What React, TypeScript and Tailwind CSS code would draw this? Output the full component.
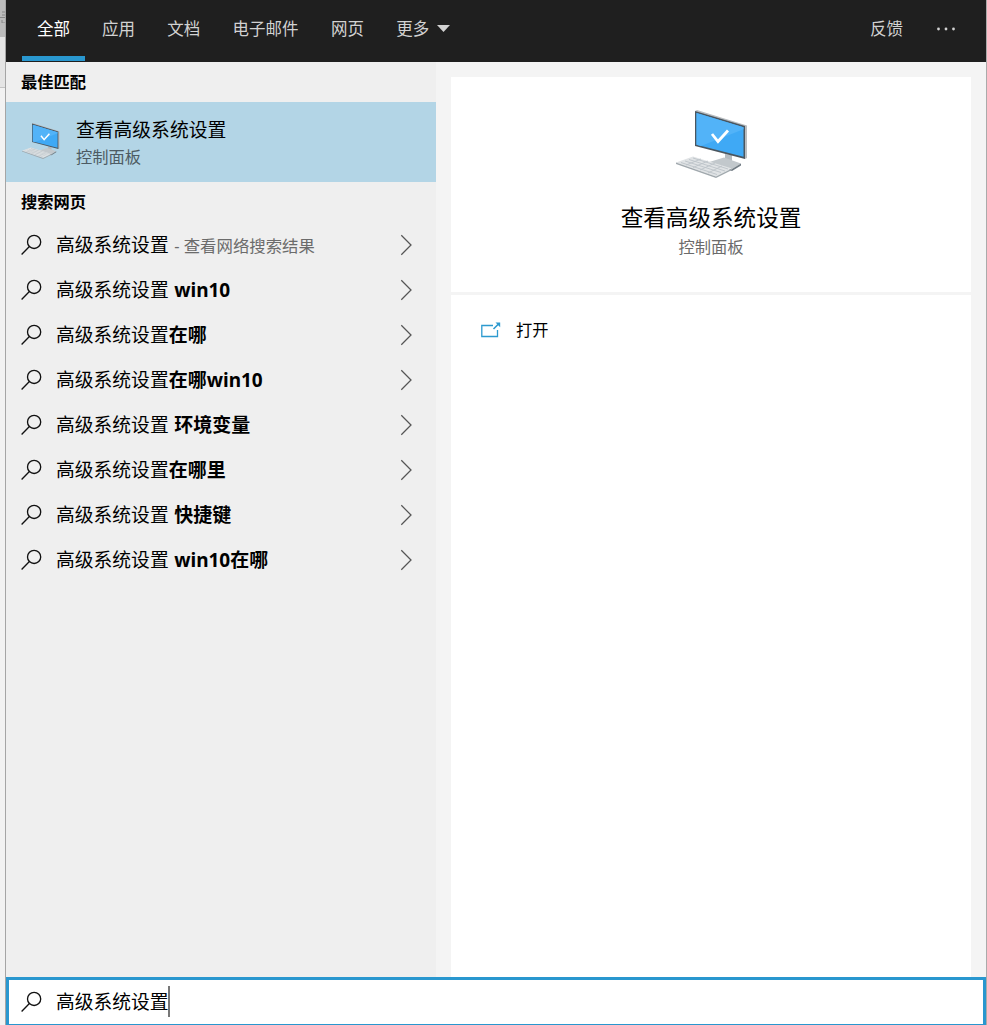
import type { ReactNode } from "react";

const tabs = ["应用", "文档", "电子邮件", "网页"];

const suggestions = [
  { space: false, text: "" },
  { space: true, text: "win10" },
  { space: false, text: "在哪" },
  { space: false, text: "在哪win10" },
  { space: true, text: "环境变量" },
  { space: false, text: "在哪里" },
  { space: true, text: "快捷键" },
  { space: true, text: "win10在哪" },
];

function SearchIcon() {
  return (
    <svg className="mb-px block h-[22px] w-[22px] shrink-0" viewBox="0 0 22 22" fill="none" stroke="#111" strokeWidth="1.35">
      <circle cx="13.1" cy="7.9" r="6.6" />
      <path d="M8.4 12.6 0.6 20.4" />
    </svg>
  );
}

function ChevronIcon() {
  return (
    <svg className="mb-0.5 block h-[22px] w-3 shrink-0" viewBox="0 0 12 22" fill="none" stroke="#555" strokeWidth="1.25">
      <path d="M1.3 1.3 11 11 1.3 20.7" />
    </svg>
  );
}

function ComputerIcon({ className }: { className: string }) {
  return (
    <svg className={className} viewBox="0 0 74 70" fill="none">
      <path d="M49 44v9h7v-8z" fill="#b4bbc0" />
      <path d="m30 53 18-5.500 17 6-9 5.500z" fill="#c2c8cc" />
      <path d="m30 53 26 6 9-5.500v2L56 61l-26-6.500z" fill="#727c84" />
      <path d="m19 1 2-1 50 15.500V48l-2 1z" fill="#b9bdc0" />
      <path d="m19 1 50 15v33L19 36z" fill="#4b565f" />
      <path d="m20.500 3 47 14.300v29.500l-47-12z" fill="#3fa9f5" />
      <path d="m20.500 3 47 14.300v2L25 35.900l-4.500-1.100z" fill="#52b3f8" />
      <path d="m36 24 6 7.500L52 20.500" stroke="#fff" strokeWidth="2.8" />
      <path d="m0 52.500 17-6 39 12-16 8z" fill="#e0e3e5" />
      <path d="m0 52.500 40 14 16-8v1.500L40 68 0 54z" fill="#a0a8ad" />
      <path
        d="m5 52.500 36 12M9 51l36 11.500M13 49.500 49 61M17 48l35 11M10 55l15-6M17 57.500l15-6.500M24 60l15-7M32 63l14-7"
        stroke="#bcc3c8"
        strokeWidth=".9"
      />
    </svg>
  );
}

function OpenIcon() {
  return (
    <svg className="block h-4 w-5 shrink-0" viewBox="0 0 20 16" fill="none" stroke="#2d9acf">
      <path d="M12 3.500H.8v11h15.700V8" strokeWidth="1.3" />
      <path d="m12.500 7 5-5" strokeWidth="1.6" />
      <path d="M14.500.5h4.700v4.700z" fill="#2d9acf" stroke="none" />
    </svg>
  );
}

function SectionTitle({ children }: { children: ReactNode }) {
  return <h2 className="flex h-10 items-center pl-[15px] text-[16.25px] font-bold">{children}</h2>;
}

function Header() {
  return (
    <header className="flex h-[62px] items-start bg-[#1f1f1f] pl-4 text-[16.5px] leading-[57px] text-[#d2d2d2]">
      <div className="mr-4 h-[61px] w-[63px] border-b-[5px] border-[#2997cf] text-center text-white">全部</div>
      <nav className="ml-px flex gap-[32.3px]">
        {tabs.map((tab) => (
          <span key={tab}>{tab}</span>
        ))}
        <span className="flex items-center gap-2">
          更多
          <svg className="h-[7px] w-[13px]" viewBox="0 0 13 7">
            <path d="M0 0h13L6.500 7z" fill="#d2d2d2" />
          </svg>
        </span>
      </nav>
      <div className="ml-auto flex items-center pr-[30px]">
        <span className="mr-[34px]">反馈</span>
        <svg className="h-1 w-[19px]" viewBox="0 0 19 4" fill="#d2d2d2">
          <circle cx="1.500" cy="2" r="1.400" />
          <circle cx="9" cy="2" r="1.400" />
          <circle cx="16.500" cy="2" r="1.400" />
        </svg>
      </div>
    </header>
  );
}

function Results() {
  return (
    <section className="w-[430px] shrink-0 bg-[#efefef]">
      <SectionTitle>最佳匹配</SectionTitle>
      <div className="flex h-20 bg-[#b3d5e6] pl-[15px]">
        <ComputerIcon className="mt-[21px] ml-px h-[37px] w-[39px]" />
        <div className="ml-[15px] pt-3.5">
          <div className="text-[18.8px] leading-7">查看高级系统设置</div>
          <div className="text-[16.25px] leading-[26px] text-[#4d5b63]">控制面板</div>
        </div>
      </div>
      <SectionTitle>搜索网页</SectionTitle>
      <ul className="pt-px">
        {suggestions.map((item, i) => (
          <li key={i} className="flex h-[45px] items-center pr-6 pl-[15px] whitespace-pre">
            <SearchIcon />
            <span className="ml-[13px] text-[18.8px]">高级系统设置</span>
            {item.text ? (
              <b className={item.space ? "ml-[5.5px] text-[19px]" : "text-[19px]"}>{item.text}</b>
            ) : (
              <span className="ml-[5.5px] pt-0.5 text-[16.4px] text-[#6b6b6b]">- 查看网络搜索结果</span>
            )}
            <span className="ml-auto">
              <ChevronIcon />
            </span>
          </li>
        ))}
      </ul>
    </section>
  );
}

function Preview() {
  return (
    <section className="flex flex-1 flex-col bg-[#f4f4f4] px-[15px] pt-[15px]">
      <div className="flex h-[215px] flex-col items-center bg-white pt-[33px]">
        <ComputerIcon className="ml-1 h-[70px] w-[74px]" />
        <h1 className="mt-[21px] text-[22.6px] leading-[34px]">查看高级系统设置</h1>
        <p className="text-[16.25px] leading-6 text-[#6b6b6b]">控制面板</p>
      </div>
      <div className="mt-[3px] flex-1 bg-white">
        <div className="flex h-[70px] items-center pl-[30px] text-[16.25px]">
          <OpenIcon />
          <span className="ml-[15px]">打开</span>
        </div>
      </div>
    </section>
  );
}

export default function App() {
  return (
    <div className="flex h-[1025px] w-[987px] overflow-hidden font-['Noto_Sans','Noto_Sans_CJK_SC',sans-serif] text-black">
      <div className="flex w-1.5 shrink-0 flex-col border-r border-[#a5a5a5] bg-[#f2f2f2]">
        <div className="h-[37px] bg-[#bcbcbc] pt-[11px]">
          <svg className="h-3 w-[5px]" viewBox="0 0 5 12" stroke="#888" fill="none">
            <path d="M2 1h3M2 4h3M0 6.500h5M2 9v3h3" />
          </svg>
        </div>
        <div className="h-[51px] border-b border-[#c4c4c4] bg-[#e5e5e5]" />
      </div>
      <div className="flex flex-1 flex-col">
        <Header />
        <main className="flex min-h-0 flex-1">
          <Results />
          <Preview />
        </main>
        <div className="flex h-12 shrink-0 items-center border-[3px] border-b border-[#2997cf] bg-white pl-3">
          <SearchIcon />
          <span className="ml-[13px] text-[18.75px]">高级系统设置</span>
          <span className="-mt-0.5 -ml-px h-[31px] w-0.5 bg-[#777]" />
        </div>
      </div>
      <div className="w-px shrink-0 bg-[#aaa]" />
    </div>
  );
}
